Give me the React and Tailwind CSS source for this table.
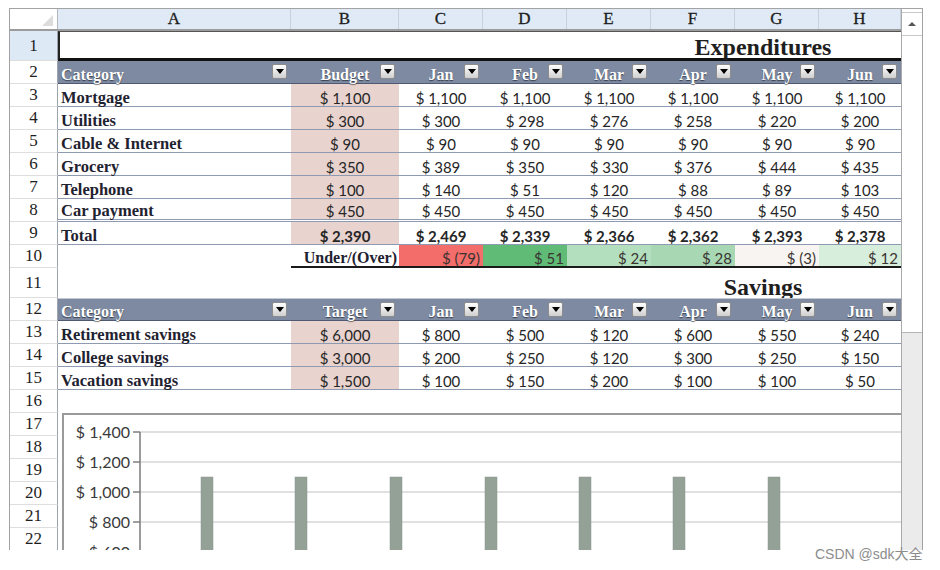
import React from 'react';

const W = ['w-[233px]', 'w-[108px]', 'w-[84px]', 'w-[84px]', 'w-[84px]', 'w-[84px]', 'w-[84px]', 'w-[82px]'];
const serif = "font-['Liberation_Serif',serif]";
const sans = "font-['Lato',sans-serif]";

function RowHead({ n, tall, active }) {
  return (
    <div
      className={`w-[48px] shrink-0 ${tall ? 'h-[30px]' : 'h-[23px]'} border-r border-r-[#9ea4ab] border-b border-b-[#dedede] flex items-center justify-center ${serif} text-[17px] text-[#1e1e1e] ${active ? 'bg-[#dde9f5]' : 'bg-white'}`}
    >
      {n}
    </div>
  );
}

function Drop() {
  return (
    <span className="absolute right-[4px] top-[3px] w-[15px] h-[15px] rounded-[2px] border border-[#8d8d8d] bg-linear-to-b from-white to-[#cfcfcf] flex items-center justify-center">
      <span className="w-0 h-0 border-x-[4px] border-x-transparent border-t-[5px] border-t-black" />
    </span>
  );
}

function HeaderRow({ n, labels, topLine }) {
  return (
    <div className="flex">
      <RowHead n={n} />
      <div className={`flex h-[23px] bg-[#7d8aa2] border-b border-b-[#4f5a72] ${topLine ? 'border-t border-t-[#c4c9d1]' : ''}`}>
        {labels.map((l, i) => (
          <div
            key={i}
            className={`${W[i]} relative h-full flex items-end ${i === 0 ? 'justify-start pl-[3px]' : 'justify-center'} ${serif} font-bold text-[16px] leading-[16px] text-white [text-shadow:0_1px_1px_rgba(0,0,0,0.55)]`}
          >
            {l}
            <Drop />
          </div>
        ))}
      </div>
    </div>
  );
}

function DataRow({ n, cat, b, vals, bold, border }) {
  return (
    <div className="flex">
      <RowHead n={n} />
      <div className={`flex h-[23px] ${border}`}>
        <div className={`${W[0]} flex items-end pl-[3px] ${serif} font-bold text-[16.5px] leading-[16px] text-[#1f2230]`}>{cat}</div>
        <div className={`${W[1]} flex items-end justify-center bg-[#e8d3cf] ${sans} ${bold ? 'font-bold' : ''} text-[15px] leading-[16px] text-[#262626]`}>{b}</div>
        {vals.map((v, i) => (
          <div key={i} className={`${W[i + 2]} flex items-end justify-center ${sans} ${bold ? 'font-bold' : ''} text-[15px] leading-[16px] text-[#262626]`}>
            {v}
          </div>
        ))}
      </div>
    </div>
  );
}

const exp = [
  ['Mortgage', '$ 1,100', ['$ 1,100', '$ 1,100', '$ 1,100', '$ 1,100', '$ 1,100', '$ 1,100']],
  ['Utilities', '$ 300', ['$ 300', '$ 298', '$ 276', '$ 258', '$ 220', '$ 200']],
  ['Cable & Internet', '$ 90', ['$ 90', '$ 90', '$ 90', '$ 90', '$ 90', '$ 90']],
  ['Grocery', '$ 350', ['$ 389', '$ 350', '$ 330', '$ 376', '$ 444', '$ 435']],
  ['Telephone', '$ 100', ['$ 140', '$ 51', '$ 120', '$ 88', '$ 89', '$ 103']],
  ['Car payment', '$ 450', ['$ 450', '$ 450', '$ 450', '$ 450', '$ 450', '$ 450']],
];

const sav = [
  ['Retirement savings', '$ 6,000', ['$ 800', '$ 500', '$ 120', '$ 600', '$ 550', '$ 240']],
  ['College savings', '$ 3,000', ['$ 200', '$ 250', '$ 120', '$ 300', '$ 250', '$ 150']],
  ['Vacation savings', '$ 1,500', ['$ 100', '$ 150', '$ 200', '$ 100', '$ 100', '$ 50']],
];

const diff = [
  ['$ (79)', 'bg-[#f36d6b]', 'w-[84px]'],
  ['$ 51', 'bg-[#5fbb76]', 'w-[84px]'],
  ['$ 24', 'bg-[#b3dfbf]', 'w-[84px]'],
  ['$ 28', 'bg-[#a7d8b3]', 'w-[84px]'],
  ['$ (3)', 'bg-[#f8f4f2]', 'w-[84px]'],
  ['$ 12', 'bg-[#d8eedd]', 'w-[82px]'],
];

const ROWLINE = 'border-b border-b-[#8e9ab2]';

function Chart() {
  const grid = [17, 47, 77, 107, 137];
  const labels = ['$ 1,400', '$ 1,200', '$ 1,000', '$ 800', '$ 600'];
  const bars = [137, 231, 326, 421, 515, 609, 704];
  return (
    <svg width="839" height="140" className="block">
      {grid.map((y, i) => (
        <g key={i}>
          <line x1="76" x2="839" y1={y} y2={y} stroke="#d6d6d6" strokeWidth="1.5" />
          <line x1="69" x2="76" y1={y} y2={y} stroke="#7f7f7f" strokeWidth="1.5" />
          <text x="66" y={y + 6} textAnchor="end" fontFamily="Lato, sans-serif" fontSize="16" fill="#3a3a3a">
            {labels[i]}
          </text>
        </g>
      ))}
      <line x1="76" x2="76" y1="17" y2="140" stroke="#7a7a7a" strokeWidth="1.5" />
      {bars.map((x, i) => (
        <rect key={i} x={x} y="62" width="12" height="80" fill="#93a197" stroke="#8a978e" strokeWidth="0.5" />
      ))}
    </svg>
  );
}

export default function App() {
  return (
    <div className="relative w-[940px] h-[570px] bg-white overflow-hidden">
      <div className="ml-[9px] mt-[8px] w-[914px] h-[542px] border-l border-t border-r border-[#a3a3a3] flex overflow-hidden">
        <div className="w-[891px] shrink-0 flex flex-col overflow-hidden">
          {/* column headers */}
          <div className="flex h-[22px] shrink-0 bg-[#dfeaf6] border-b-2 border-b-[#9c9c9c]">
            <div className="w-[48px] bg-white border-r border-r-[#b5b9be] relative">
              <span className="absolute right-[4px] bottom-[3px] w-0 h-0 border-l-[11px] border-l-transparent border-b-[11px] border-b-[#dcdcdc]" />
            </div>
            {['A', 'B', 'C', 'D', 'E', 'F', 'G', 'H'].map((c, i) => (
              <div key={c} className={`${W[i]} border-r border-r-[#c8d1db] flex items-center justify-center ${serif} text-[17px] text-[#1e1e1e] [-webkit-text-stroke:0.3px_#1e1e1e]`}>
                {c}
              </div>
            ))}
          </div>

          {/* row 1 */}
          <div className="flex shrink-0">
            <RowHead n={1} tall active />
            <div className="w-[843px] h-[30px] border-b-[3px] border-b-[#111] border-l-2 border-l-[#222] border-t border-t-[#555] flex items-end pl-[565px]">
              <div className={`w-[276px] text-center ${serif} font-bold text-[24px] leading-[21px] text-[#1e1e1e]`}>Expenditures</div>
            </div>
          </div>

          <HeaderRow n={2} labels={['Category', 'Budget', 'Jan', 'Feb', 'Mar', 'Apr', 'May', 'Jun']} />
          {exp.map((r, i) => (
            <DataRow
              key={i}
              n={i + 3}
              cat={r[0]}
              b={r[1]}
              vals={r[2]}
              border={i === 5 ? 'border-b-[3px] border-double border-b-[#8e9ab2]' : ROWLINE}
            />
          ))}
          <DataRow n={9} cat="Total" b="$ 2,390" vals={['$ 2,469', '$ 2,339', '$ 2,366', '$ 2,362', '$ 2,393', '$ 2,378']} bold border={ROWLINE} />

          {/* row 10 */}
          <div className="flex shrink-0">
            <RowHead n={10} />
            <div className="flex h-[23px]">
              <div className="w-[233px]" />
              <div className="flex border-b-2 border-b-[#1a1a1a]">
                <div className={`w-[108px] flex items-end justify-end pr-[2px] ${serif} font-bold text-[16px] leading-[16px] text-[#1f2230]`}>Under/(Over)</div>
                {diff.map((d, i) => (
                  <div key={i} className={`${d[2]} ${d[1]} flex items-end justify-end pr-[3px] ${sans} text-[15px] leading-[16px] text-[#3a3430]`}>
                    {d[0]}
                  </div>
                ))}
              </div>
            </div>
          </div>

          {/* row 11 */}
          <div className="flex shrink-0">
            <RowHead n={11} tall />
            <div className="w-[843px] h-[30px] flex items-end pl-[567px]">
              <div className={`w-[276px] text-center ${serif} font-bold text-[24px] leading-[22px] text-[#1e1e1e]`}>Savings</div>
            </div>
          </div>

          <HeaderRow n={12} labels={['Category', 'Target', 'Jan', 'Feb', 'Mar', 'Apr', 'May', 'Jun']} topLine />
          {sav.map((r, i) => (
            <DataRow key={i} n={i + 13} cat={r[0]} b={r[1]} vals={r[2]} border={ROWLINE} />
          ))}

          {/* row 16 */}
          <div className="flex shrink-0">
            <RowHead n={16} />
            <div className="w-[843px] h-[23px]" />
          </div>

          {/* rows 17-22 with chart */}
          <div className="flex shrink-0">
            <div className="flex flex-col">
              {[17, 18, 19, 20, 21, 22].map((n) => (
                <RowHead key={n} n={n} />
              ))}
            </div>
            <div className="w-[843px] pl-[4px] overflow-hidden">
              <div className="h-full border-l-2 border-t-2 border-[#9a9a9a] bg-white overflow-hidden">
                <Chart />
              </div>
            </div>
          </div>
        </div>

        {/* scrollbar */}
        <div className="w-[21px] shrink-0 border-l border-l-[#a9a9a9] flex flex-col bg-white">
          <div className="h-[4px] border-b border-b-[#c9c9c9]" />
          <div className="h-[23px] border-b border-b-[#c9c9c9] flex items-center justify-center">
            <span className="w-0 h-0 border-x-[4px] border-x-transparent border-b-[4px] border-b-[#555]" />
          </div>
          <div className="h-[297px] border-b border-b-[#b5b5b5] bg-white" />
          <div className="flex-1 bg-[#ebebeb]" />
        </div>
      </div>

      <div className="absolute left-[815px] top-[545px] text-[14px] leading-[18px] text-[#8c8c8c] font-['Liberation_Sans','Noto_Sans_CJK_SC',sans-serif]">
        CSDN @sdk大全
      </div>
    </div>
  );
}
